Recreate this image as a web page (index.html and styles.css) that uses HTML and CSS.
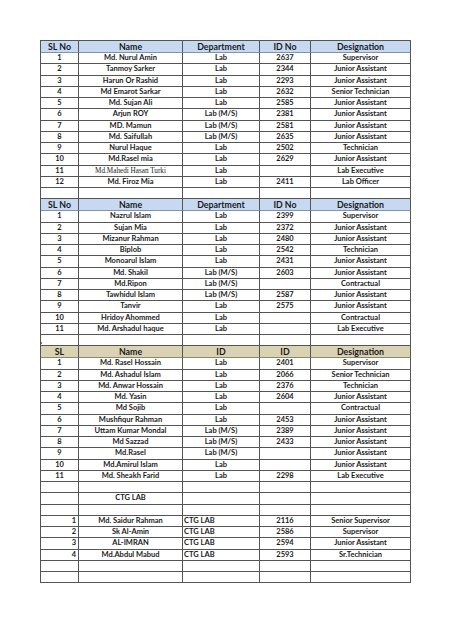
FILE: index.html
```html
<!DOCTYPE html>
<html>
<head>
<meta charset="utf-8">
<link rel="stylesheet" href="styles.css">
</head>
<body>
<div class="sheet">
  <div class="row head blue"><div>SL No</div><div>Name</div><div>Department</div><div>ID No</div><div>Designation</div></div>
  <div class="row"><div>1</div><div>Md. Nurul Amin</div><div>Lab</div><div>2637</div><div>Supervisor</div></div>
  <div class="row"><div>2</div><div>Tanmoy Sarker</div><div>Lab</div><div>2344</div><div>Junior Assistant</div></div>
  <div class="row"><div>3</div><div>Harun Or Rashid</div><div>Lab</div><div>2293</div><div>Junior Assistant</div></div>
  <div class="row"><div>4</div><div>Md Emarot Sarkar</div><div>Lab</div><div>2632</div><div>Senior Technician</div></div>
  <div class="row"><div>5</div><div>Md. Sujan Ali</div><div>Lab</div><div>2585</div><div>Junior Assistant</div></div>
  <div class="row"><div>6</div><div>Arjun ROY</div><div>Lab (M/S)</div><div>2381</div><div>Junior Assistant</div></div>
  <div class="row"><div>7</div><div>MD. Mamun</div><div>Lab (M/S)</div><div>2581</div><div>Junior Assistant</div></div>
  <div class="row"><div>8</div><div>Md. Saifullah</div><div>Lab (M/S)</div><div>2635</div><div>Junior Assistant</div></div>
  <div class="row"><div>9</div><div>Nurul Haque</div><div>Lab</div><div>2502</div><div>Technician</div></div>
  <div class="row"><div>10</div><div>Md.Rasel mia</div><div>Lab</div><div>2629</div><div>Junior Assistant</div></div>
  <div class="row"><div>11</div><div class="serif">Md.Mahedi Hasan Turki</div><div>Lab</div><div></div><div>Lab Executive</div></div>
  <div class="row"><div>12</div><div>Md. Firoz Mia</div><div>Lab</div><div>2411</div><div>Lab Officer</div></div>
  <div class="row"><div></div><div></div><div></div><div></div><div></div></div>

  <div class="row head blue"><div>SL No</div><div>Name</div><div>Department</div><div>ID No</div><div>Designation</div></div>
  <div class="row"><div>1</div><div>Nazrul Islam</div><div>Lab</div><div>2399</div><div>Supervisor</div></div>
  <div class="row"><div>2</div><div>Sujan Mia</div><div>Lab</div><div>2372</div><div>Junior Assistant</div></div>
  <div class="row"><div>3</div><div>Mizanur Rahman</div><div>Lab</div><div>2480</div><div>Junior Assistant</div></div>
  <div class="row"><div>4</div><div>Biplob</div><div>Lab</div><div>2542</div><div>Technician</div></div>
  <div class="row"><div>5</div><div>Monoarul Islam</div><div>Lab</div><div>2431</div><div>Junior Assistant</div></div>
  <div class="row"><div>6</div><div>Md. Shakil</div><div>Lab (M/S)</div><div>2603</div><div>Junior Assistant</div></div>
  <div class="row"><div>7</div><div>Md.Ripon</div><div>Lab (M/S)</div><div></div><div>Contractual</div></div>
  <div class="row"><div>8</div><div>Tawhidul Islam</div><div>Lab (M/S)</div><div>2587</div><div>Junior Assistant</div></div>
  <div class="row"><div>9</div><div>Tanvir</div><div>Lab</div><div>2575</div><div>Junior Assistant</div></div>
  <div class="row"><div>10</div><div>Hridoy Ahommed</div><div>Lab</div><div></div><div>Contractual</div></div>
  <div class="row"><div>11</div><div>Md. Arshadul haque</div><div>Lab</div><div></div><div>Lab Executive</div></div>
  <div class="row gap"><div class="mark"></div><div></div><div></div><div></div><div></div></div>

  <div class="row head tan"><div>SL</div><div>Name</div><div>ID</div><div>ID</div><div>Designation</div></div>
  <div class="row"><div>1</div><div>Md. Rasel Hossain</div><div>Lab</div><div>2401</div><div>Supervisor</div></div>
  <div class="row"><div>2</div><div>Md. Ashadul Islam</div><div>Lab</div><div>2066</div><div>Senior Technician</div></div>
  <div class="row"><div>3</div><div>Md. Anwar Hossain</div><div>Lab</div><div>2376</div><div>Technician</div></div>
  <div class="row"><div>4</div><div>Md. Yasin</div><div>Lab</div><div>2604</div><div>Junior Assistant</div></div>
  <div class="row"><div>5</div><div>Md Sojib</div><div>Lab</div><div></div><div>Contractual</div></div>
  <div class="row"><div>6</div><div>Mushfiqur Rahman</div><div>Lab</div><div>2453</div><div>Junior Assistant</div></div>
  <div class="row"><div>7</div><div>Uttam Kumar Mondal</div><div>Lab (M/S)</div><div>2389</div><div>Junior Assistant</div></div>
  <div class="row"><div>8</div><div>Md Sazzad</div><div>Lab (M/S)</div><div>2433</div><div>Junior Assistant</div></div>
  <div class="row"><div>9</div><div>Md.Rasel</div><div>Lab (M/S)</div><div></div><div>Junior Assistant</div></div>
  <div class="row"><div>10</div><div>Md.Amirul Islam</div><div>Lab</div><div></div><div>Junior Assistant</div></div>
  <div class="row"><div>11</div><div>Md. Sheakh Farid</div><div>Lab</div><div>2298</div><div>Lab Executive</div></div>
  <div class="row"><div></div><div></div><div></div><div></div><div></div></div>
  <div class="row"><div></div><div>CTG LAB</div><div></div><div></div><div></div></div>
  <div class="row"><div></div><div></div><div></div><div></div><div></div></div>
  <div class="row ctg"><div>1</div><div>Md. Saidur Rahman</div><div>CTG LAB</div><div>2116</div><div>Senior Supervisor</div></div>
  <div class="row ctg"><div>2</div><div>Sk Al-Amin</div><div>CTG LAB</div><div>2586</div><div>Supervisor</div></div>
  <div class="row ctg"><div>3</div><div>AL-IMRAN</div><div>CTG LAB</div><div>2594</div><div>Junior Assistant</div></div>
  <div class="row ctg"><div>4</div><div>Md.Abdul Mabud</div><div>CTG LAB</div><div>2593</div><div>Sr.Technician</div></div>
  <div class="row"><div></div><div></div><div></div><div></div><div></div></div>
  <div class="row"><div></div><div></div><div></div><div></div><div></div></div>
</div>
</body>
</html>
```
FILE: styles.css
```css
html, body {
  margin: 0;
  padding: 0;
  background: #ffffff;
}
body {
  padding: 40px 0 0 40px;
  font-family: Lato, "Open Sans", sans-serif;
  color: #1a1a1a;
}
.sheet {
  width: 370px;
  border-left: 1px solid #555555;
  border-top: 1px solid #555555;
}
.row {
  display: grid;
  grid-template-columns: 38px 104px 77px 51px 100px;
  height: 11.25px;
  box-sizing: border-box;
  font-size: 7.5px;
  font-weight: 700;
  line-height: 10px;
}
.row > div {
  border-right: 1px solid #555555;
  border-bottom: 1px solid #555555;
  text-align: center;
  white-space: nowrap;
  overflow: hidden;
  box-sizing: border-box;
}
.row.head {
  height: 12px;
  font-size: 8.8px;
  line-height: 11px;
}
.blue > div {
  background: #c6d9f1;
  border-bottom-color: #7f93ad;
}
.tan > div {
  background: #d9d2b3;
  border-bottom-color: #8d8670;
}
.serif {
  font-family: "Liberation Serif", serif;
  font-weight: 400;
  font-size: 7.2px;
}
.ctg > div:nth-child(1) {
  text-align: right;
  padding-right: 2px;
}
.ctg > div:nth-child(3) {
  text-align: left;
  padding-left: 1px;
}
.gap .mark {
  position: relative;
}
.gap .mark::after {
  content: "";
  position: absolute;
  left: 0;
  bottom: 1px;
  width: 1px;
  height: 2px;
  background: #777;
}
```
